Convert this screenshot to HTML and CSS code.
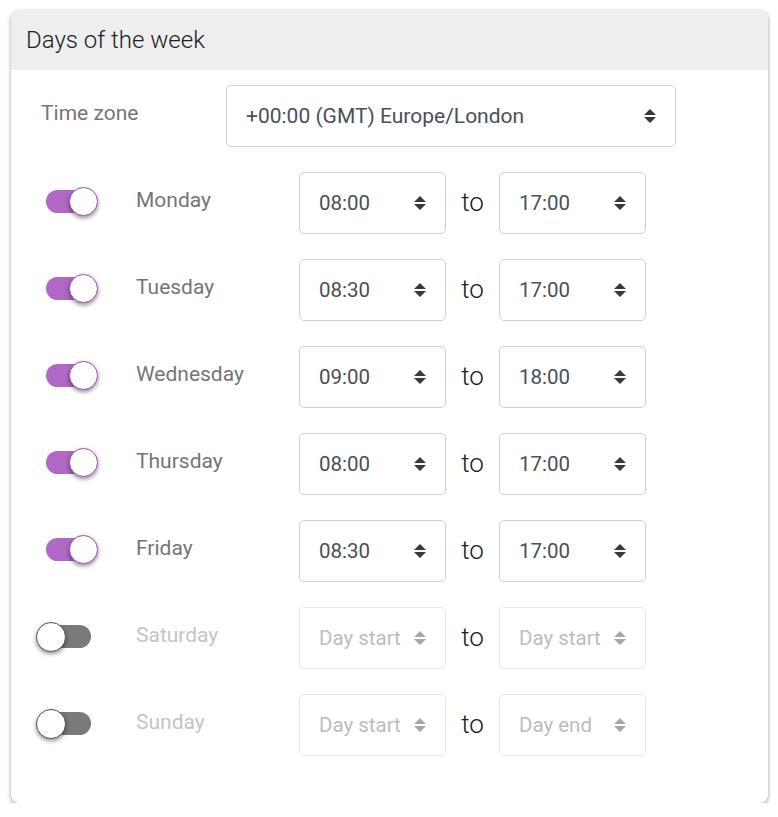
FILE: index.html
```html
<!DOCTYPE html>
<html>
<head>
<meta charset="utf-8">
<link rel="stylesheet" href="styles.css">
</head>
<body>
<div class="card">
  <div class="card-header">Days of the week</div>
  <div class="card-body">
    <div class="tz-row">
      <div class="tz-label">Time zone</div>
      <div class="select tz-select"><span>+00:00 (GMT) Europe/London</span><svg class="arrows" viewBox="0 0 12 16" width="12" height="16"><path d="M0 7 L6 1 L12 7 Z M0 9 L12 9 L6 15 Z"/></svg></div>
    </div>

    <div class="day-row">
      <div class="toggle-cell"><div class="switch on"><div class="thumb"></div></div></div>
      <div class="day-label">Monday</div>
      <div class="select time"><span>08:00</span><svg class="arrows" viewBox="0 0 12 16" width="12" height="16"><path d="M0 7 L6 1 L12 7 Z M0 9 L12 9 L6 15 Z"/></svg></div>
      <div class="to">to</div>
      <div class="select time"><span>17:00</span><svg class="arrows" viewBox="0 0 12 16" width="12" height="16"><path d="M0 7 L6 1 L12 7 Z M0 9 L12 9 L6 15 Z"/></svg></div>
    </div>

    <div class="day-row">
      <div class="toggle-cell"><div class="switch on"><div class="thumb"></div></div></div>
      <div class="day-label">Tuesday</div>
      <div class="select time"><span>08:30</span><svg class="arrows" viewBox="0 0 12 16" width="12" height="16"><path d="M0 7 L6 1 L12 7 Z M0 9 L12 9 L6 15 Z"/></svg></div>
      <div class="to">to</div>
      <div class="select time"><span>17:00</span><svg class="arrows" viewBox="0 0 12 16" width="12" height="16"><path d="M0 7 L6 1 L12 7 Z M0 9 L12 9 L6 15 Z"/></svg></div>
    </div>

    <div class="day-row">
      <div class="toggle-cell"><div class="switch on"><div class="thumb"></div></div></div>
      <div class="day-label">Wednesday</div>
      <div class="select time"><span>09:00</span><svg class="arrows" viewBox="0 0 12 16" width="12" height="16"><path d="M0 7 L6 1 L12 7 Z M0 9 L12 9 L6 15 Z"/></svg></div>
      <div class="to">to</div>
      <div class="select time"><span>18:00</span><svg class="arrows" viewBox="0 0 12 16" width="12" height="16"><path d="M0 7 L6 1 L12 7 Z M0 9 L12 9 L6 15 Z"/></svg></div>
    </div>

    <div class="day-row">
      <div class="toggle-cell"><div class="switch on"><div class="thumb"></div></div></div>
      <div class="day-label">Thursday</div>
      <div class="select time"><span>08:00</span><svg class="arrows" viewBox="0 0 12 16" width="12" height="16"><path d="M0 7 L6 1 L12 7 Z M0 9 L12 9 L6 15 Z"/></svg></div>
      <div class="to">to</div>
      <div class="select time"><span>17:00</span><svg class="arrows" viewBox="0 0 12 16" width="12" height="16"><path d="M0 7 L6 1 L12 7 Z M0 9 L12 9 L6 15 Z"/></svg></div>
    </div>

    <div class="day-row">
      <div class="toggle-cell"><div class="switch on"><div class="thumb"></div></div></div>
      <div class="day-label">Friday</div>
      <div class="select time"><span>08:30</span><svg class="arrows" viewBox="0 0 12 16" width="12" height="16"><path d="M0 7 L6 1 L12 7 Z M0 9 L12 9 L6 15 Z"/></svg></div>
      <div class="to">to</div>
      <div class="select time"><span>17:00</span><svg class="arrows" viewBox="0 0 12 16" width="12" height="16"><path d="M0 7 L6 1 L12 7 Z M0 9 L12 9 L6 15 Z"/></svg></div>
    </div>

    <div class="day-row disabled">
      <div class="toggle-cell"><div class="switch off"><div class="thumb"></div></div></div>
      <div class="day-label">Saturday</div>
      <div class="select time"><span>Day start</span><svg class="arrows" viewBox="0 0 12 16" width="12" height="16"><path d="M0 7 L6 1 L12 7 Z M0 9 L12 9 L6 15 Z"/></svg></div>
      <div class="to">to</div>
      <div class="select time"><span>Day start</span><svg class="arrows" viewBox="0 0 12 16" width="12" height="16"><path d="M0 7 L6 1 L12 7 Z M0 9 L12 9 L6 15 Z"/></svg></div>
    </div>

    <div class="day-row disabled">
      <div class="toggle-cell"><div class="switch off"><div class="thumb"></div></div></div>
      <div class="day-label">Sunday</div>
      <div class="select time"><span>Day start</span><svg class="arrows" viewBox="0 0 12 16" width="12" height="16"><path d="M0 7 L6 1 L12 7 Z M0 9 L12 9 L6 15 Z"/></svg></div>
      <div class="to">to</div>
      <div class="select time"><span>Day end</span><svg class="arrows" viewBox="0 0 12 16" width="12" height="16"><path d="M0 7 L6 1 L12 7 Z M0 9 L12 9 L6 15 Z"/></svg></div>
    </div>
  </div>
</div>
</body>
</html>
```
FILE: styles.css
```css
* { box-sizing: border-box; }
html, body { margin: 0; padding: 0; background: #fff; }
body {
  font-family: Roboto, "Liberation Sans", sans-serif;
  padding: 10px 10px 0 11px;
}
.card {
  width: 757px;
  background: #fff;
  border-radius: 8px;
  box-shadow: 0 2px 4px rgba(0,0,0,0.35), 0 0 2px rgba(0,0,0,0.08);
  overflow: hidden;
}
.card-header {
  height: 60px;
  background: #eeeeee;
  padding-left: 15px;
  font-size: 24px;
  font-weight: 300;
  line-height: 60px;
  color: #212121;
}
.card-body {
  padding: 15px 0 47px 30px;
}
.tz-row {
  display: flex;
  align-items: center;
  height: 62px;
}
.tz-label {
  width: 185px;
  font-size: 21px;
  color: #757575;
  margin-bottom: 7px;
}
.select {
  display: flex;
  align-items: center;
  justify-content: space-between;
  height: 62px;
  border: 1px solid #d0d0d0;
  border-radius: 5px;
  padding: 0 19px 1px 19px;
  font-size: 21px;
  color: #495057;
  background: #fff;
}
.arrows { fill: #343a40; flex: none; margin-top: 1px; }
.tz-select { width: 450px; }
.day-row {
  display: flex;
  align-items: center;
  height: 62px;
  margin-top: 25px;
}
.toggle-cell {
  width: 95px;
  padding-left: 5px;
  margin-bottom: 4px;
}
.switch {
  position: relative;
  width: 45px;
  height: 23px;
  border-radius: 12px;
}
.switch.on { background: #b068c6; }
.switch.off { background: #7a7a7a; margin-left: -4px; width: 49px; }
.thumb {
  position: absolute;
  top: -3px;
  width: 29px;
  height: 29px;
  border-radius: 50%;
  background: #fff;
  box-shadow: 0 2px 4px rgba(0,0,0,0.45);
}
.switch.on .thumb { right: -7px; border: 1.5px solid #9c4fb5; }
.switch.off .thumb { left: -6px; top: -3px; width: 30px; height: 30px; border: 1.5px solid #555; }
.day-label {
  width: 163px;
  font-size: 21px;
  color: #757575;
  margin-bottom: 7px;
}
.time { width: 147px; }
.time span { font-size: 20.5px; }
.to {
  width: 53px;
  text-align: center;
  font-size: 26px;
  font-weight: 300;
  color: #212121;
  margin-bottom: 2px;
}
.disabled .day-label { color: #c4c4c4; }
.disabled .select { border-color: #e8e8e8; color: #bdbdbd; }
.disabled .arrows { fill: #a8a8a8; }
```
